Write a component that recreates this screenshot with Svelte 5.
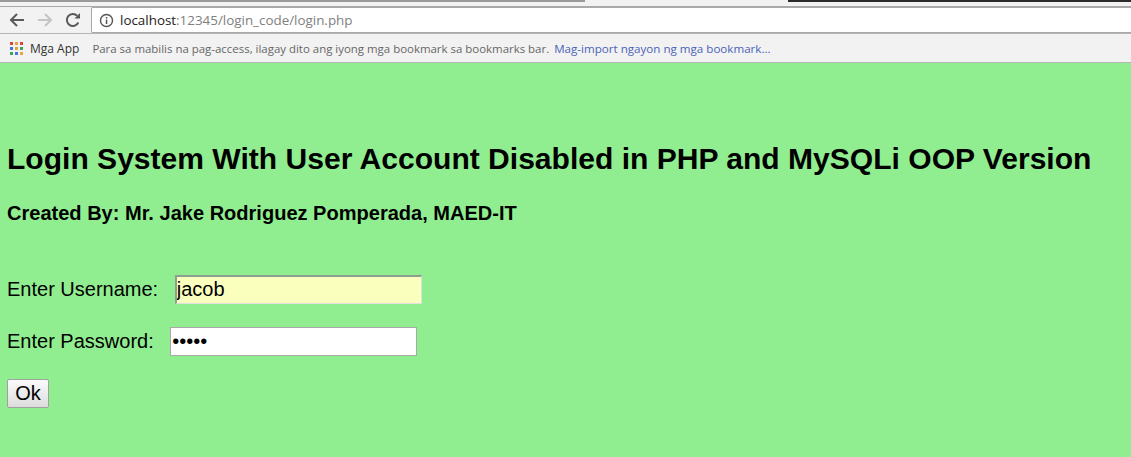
<script>
  let username = 'jacob';
  let password = 'abcde';
  const dots = ['#d9453c', '#e9a23b', '#d9453c', '#3f78e0', '#e9a23b', '#3fa45b', '#3fa45b', '#3f78e0', '#e9a23b'];
</script>

<div class="tabstrip">
  <div class="tab-edge left"></div>
  <div class="tab-edge dark"></div>
</div>

<div class="toolbar">
  <svg class="nav" width="18" height="18" viewBox="0 0 18 18" fill="none" stroke="#5a5a5a" stroke-width="2">
    <path d="M16 9H3M9 3L3 9l6 6" />
  </svg>
  <svg class="nav" width="18" height="18" viewBox="0 0 18 18" fill="none" stroke="#c4c4c4" stroke-width="2">
    <path d="M2 9h13M9 3l6 6-6 6" />
  </svg>
  <svg class="nav" width="18" height="18" viewBox="0 0 18 18" fill="none">
    <path d="M14.3 11.5A6 6 0 1 1 13.2 4.8" stroke="#5a5a5a" stroke-width="2" />
    <path d="M10.5 7.5H16V2z" fill="#5a5a5a" />
  </svg>
  <div class="omnibox">
    <svg width="15" height="15" viewBox="0 0 15 15" fill="none">
      <circle cx="7.5" cy="7.5" r="6" stroke="#555" stroke-width="1.4" />
      <rect x="6.8" y="6.5" width="1.5" height="4.5" fill="#555" />
      <rect x="6.8" y="4" width="1.5" height="1.5" fill="#555" />
    </svg>
    <span class="url"><span class="host">localhost</span>:12345/login_code/login.php</span>
  </div>
</div>

<div class="bookmarks">
  <div class="apps">
    {#each dots as color}
      <i style="background:{color}"></i>
    {/each}
  </div>
  <span class="apps-label">Mga App</span>
  <span class="hint">Para sa mabilis na pag-access, ilagay dito ang iyong mga bookmark sa bookmarks bar.</span>
  <span class="link">Mag-import ngayon ng mga bookmark...</span>
</div>

<main>
  <h1>Login System With User Account Disabled in PHP and MySQLi OOP Version</h1>
  <h3>Created By: Mr. Jake Rodriguez Pomperada, MAED-IT</h3>
  <form on:submit|preventDefault>
    <div class="row">
      <label for="user">Enter Username:</label>
      <input id="user" class="filled" type="text" bind:value={username} />
    </div>
    <div class="row">
      <label for="pass">Enter Password:</label>
      <input id="pass" type="password" bind:value={password} />
    </div>
    <button type="submit">Ok</button>
  </form>
</main>

<style>
  :global(body) {
    background: #90ee90;
    font-family: "Liberation Sans", Arial, sans-serif;
    overflow: hidden;
  }
  .tabstrip {
    height: 6px;
    background: #f2f2f2;
    border-bottom: 1px solid #a9a9a9;
    display: flex;
    justify-content: space-between;
  }
  .tab-edge.left {
    width: 585px;
    height: 2px;
    background: #9a9a9a;
  }
  .tab-edge.dark {
    width: 343px;
    height: 2px;
    background: #2a2a2a;
  }
  .toolbar {
    height: 26px;
    background: #f2f2f2;
    display: flex;
    align-items: center;
    padding-left: 8px;
    gap: 10px;
  }
  .nav {
    flex: none;
  }
  .omnibox {
    flex: 1;
    height: 26px;
    margin-left: -1px;
    box-sizing: border-box;
    background: #fff;
    border: 1px solid #a9a9a9;
    border-right: none;
    border-radius: 2px 0 0 2px;
    display: flex;
    align-items: center;
    gap: 6px;
    padding-left: 7px;
  }
  .url {
    font-size: 13.4px;
    color: #808080;
    font-family: "Open Sans", sans-serif;
  }
  .host {
    color: #222;
  }
  .bookmarks {
    height: 30px;
    background: #f2f2f2;
    border-top: 1px solid #b5b5b5;
    border-bottom: 1px solid #b5b5b5;
    box-sizing: border-box;
    display: flex;
    align-items: center;
    padding-left: 10px;
    font-family: "Open Sans", sans-serif;
    font-size: 11.45px;
  }
  .apps {
    display: grid;
    grid-template-columns: repeat(3, 3px);
    gap: 2px;
    margin-right: 7px;
  }
  .apps i {
    display: block;
    width: 3px;
    height: 3px;
  }
  .apps-label {
    font-size: 12px;
    color: #333;
    margin-right: 13px;
  }
  .hint {
    color: #666;
    margin-right: 5px;
  }
  .link {
    font-size: 11.6px;
    color: #4a63b8;
  }
  main {
    padding: 80px 7px 0;
    color: #000;
  }
  h1 {
    margin: 0 0 28px;
    font-size: 30.05px;
    line-height: 32px;
    font-weight: bold;
    white-space: nowrap;
  }
  h3 {
    margin: 0 0 51px;
    font-size: 20.05px;
    line-height: 21px;
    font-weight: bold;
  }
  .row {
    display: flex;
    align-items: center;
    gap: 16.6px;
    margin-bottom: 23px;
    height: 29px;
    font-size: 20px;
  }
  input {
    width: 247px;
    height: 29px;
    box-sizing: border-box;
    padding: 0 1px;
    border: 1px solid #a9a9a9;
    background: #fff;
    font: 20px "Liberation Sans", Arial, sans-serif;
    color: #000;
    outline: none;
  }
  input.filled {
    background: #faffbd;
    border-width: 2px 1px 1px 2px;
    border-color: #8f9f8f #e0e0e0 #e0e0e0 #8f9f8f;
    padding: 0 0 2px;
  }
  button {
    display: block;
    width: 42px;
    height: 29px;
    padding: 0;
    font: 20px "Liberation Sans", Arial, sans-serif;
    color: #000;
    background: linear-gradient(#fbfbfb, #dcdcdc);
    border: 1px solid #a0a0a0;
    border-radius: 2px;
  }
</style>
